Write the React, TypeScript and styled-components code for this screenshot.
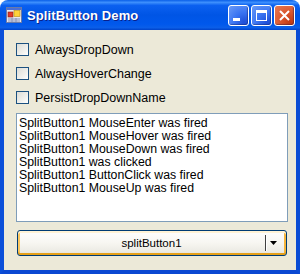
import React, { useState, ReactElement } from 'react';
import styled, { createGlobalStyle } from 'styled-components';

const GlobalStyle = createGlobalStyle`
    html, body {
        margin: 0;
        padding: 0;
        background: #ffffff;
    }
    * {
        box-sizing: border-box;
    }
`;

const Window = styled.div`
    width: 300px;
    height: 274px;
    display: flex;
    flex-direction: column;
    font-family: "Liberation Sans", Arial, sans-serif;
`;

const TitleBar = styled.div`
    height: 30px;
    flex: none;
    display: flex;
    align-items: center;
    padding: 0 5px 0 6px;
    border-radius: 8px 8px 0 0;
    background: linear-gradient(to bottom, #0a5fe8 0%, #3d8ffd 8%, #0b60f0 18%, #0055e5 50%, #0058ec 80%, #0a5ee9 92%, #0042c8 100%);
`;

const TitleText = styled.div`
    flex: 1;
    margin-left: 5px;
    color: #ffffff;
    font-weight: bold;
    font-size: 13px;
    letter-spacing: 0.1px;
    text-shadow: 1px 1px 0 #0a1f8a;
`;

const Controls = styled.div`
    display: flex;
    gap: 2px;
    margin-top: 1px;
`;

const ControlButton = styled.button<{ $close?: boolean }>`
    width: 21px;
    height: 21px;
    padding: 0;
    border: 1px solid #ffffff;
    border-radius: 3px;
    display: flex;
    align-items: center;
    justify-content: center;
    background: ${p => p.$close
        ? 'radial-gradient(circle at 80% 85%, #c23a14 0%, #d9532a 40%, #e67a55 100%)'
        : 'radial-gradient(circle at 80% 85%, #1e4fd8 0%, #3a74f2 45%, #6b9bf7 100%)'};
    box-shadow: inset -1px -1px 1px rgba(0, 0, 60, 0.35);
`;

const Body = styled.div`
    flex: 1;
    background: #ece9d8;
    border: 4px solid #0a54e0;
    border-top: none;
    border-left-color: #0b4fd9;
    border-right-color: #0a4cd4;
    border-bottom-color: #0a48d2;
    padding: 13px 8px 0 12px;
    display: flex;
    flex-direction: column;
`;

const CheckList = styled.div`
    display: flex;
    flex-direction: column;
    gap: 11px;
`;

const CheckRow = styled.label`
    display: flex;
    align-items: center;
    height: 13px;
    font-size: 12.5px;
    color: #000000;
    cursor: default;
`;

const CheckBox = styled.span`
    width: 13px;
    height: 13px;
    flex: none;
    border: 1px solid #1c5180;
    background: linear-gradient(135deg, #dcdcd7 0%, #f0f0ec 60%, #ffffff 100%);
    margin-right: 6px;
`;

const LogBox = styled.div`
    margin-top: 9px;
    height: 109px;
    background: #ffffff;
    border: 1px solid #7f9db9;
    padding: 3px 2px;
    font-size: 12.3px;
    line-height: 13px;
    color: #000000;
`;

const SplitButton = styled.div`
    margin-top: 8px;
    margin-left: 1px;
    margin-right: 1px;
    height: 26px;
    display: flex;
    align-items: center;
    border: 1px solid #003c74;
    border-radius: 3px;
    background: linear-gradient(to bottom, #ffffff 0%, #f7f6f1 50%, #ecebe4 85%, #e3e0d6 100%);
    box-shadow: inset 0 2px 0 #fff3d6, inset 0 -2px 0 #e5a01a, inset 2px 0 0 #fbc760, inset -2px 0 0 #f5b53c;
    font-size: 11.5px;
    color: #000000;
`;

const ButtonLabel = styled.div`
    flex: 1;
    text-align: center;
    padding-left: 20px;
`;

const Divider = styled.div`
    width: 1px;
    height: 16px;
    background: #404040;
    box-shadow: 1px 0 0 #ffffff;
`;

const Arrow = styled.div`
    width: 20px;
    display: flex;
    justify-content: center;
    padding-right: 6px;
`;

const AppIcon = () => (
    <svg width="16" height="16" viewBox="0 0 16 16">
        <rect x="0.5" y="0.5" width="15" height="15" fill="#e8e8f0" stroke="#6a7aa8" />
        <rect x="1" y="1" width="14" height="2" fill="#4b6fd6" />
        <rect x="2" y="5" width="5" height="5" fill="#e23a2a" stroke="#8a1a10" strokeWidth="0.6" />
        <rect x="8" y="3.5" width="6" height="6" fill="#ffd23a" stroke="#b88a10" strokeWidth="0.6" />
        <line x1="2" y1="12" x2="14" y2="12" stroke="#8892b8" />
        <line x1="2" y1="14" x2="14" y2="14" stroke="#8892b8" />
        <line x1="6" y1="11" x2="6" y2="15" stroke="#8892b8" />
        <line x1="10" y1="11" x2="10" y2="15" stroke="#8892b8" />
    </svg>
);

const options = ['AlwaysDropDown', 'AlwaysHoverChange', 'PersistDropDownName'];

const log = [
    'SplitButton1 MouseEnter was fired',
    'SplitButton1 MouseHover was fired',
    'SplitButton1 MouseDown was fired',
    'SplitButton1 was clicked',
    'SplitButton1 ButtonClick was fired',
    'SplitButton1 MouseUp was fired',
];

export default function App(): ReactElement {
    const [checked] = useState<boolean[]>([false, false, false]);

    return (
        <>
            <GlobalStyle />
            <Window>
                <TitleBar>
                    <AppIcon />
                    <TitleText>SplitButton Demo</TitleText>
                    <Controls>
                        <ControlButton aria-label="Minimize">
                            <svg width="19" height="19" viewBox="0 0 19 19">
                                <rect x="4" y="12" width="7" height="3" fill="#ffffff" />
                            </svg>
                        </ControlButton>
                        <ControlButton aria-label="Maximize">
                            <svg width="19" height="19" viewBox="0 0 19 19">
                                <rect x="4.5" y="4.5" width="10" height="10" fill="none" stroke="#ffffff" />
                                <rect x="4" y="4" width="11" height="3" fill="#ffffff" />
                            </svg>
                        </ControlButton>
                        <ControlButton aria-label="Close" $close>
                            <svg width="19" height="19" viewBox="0 0 19 19">
                                <path d="M5 5 L14 14 M14 5 L5 14" stroke="#ffffff" strokeWidth="2" />
                            </svg>
                        </ControlButton>
                    </Controls>
                </TitleBar>
                <Body>
                    <CheckList>
                        {options.map((o, i) => (
                            <CheckRow key={o}>
                                <CheckBox aria-checked={checked[i]} />
                                {o}
                            </CheckRow>
                        ))}
                    </CheckList>
                    <LogBox>
                        {log.map((l, i) => <div key={i}>{l}</div>)}
                    </LogBox>
                    <SplitButton>
                        <ButtonLabel>splitButton1</ButtonLabel>
                        <Divider />
                        <Arrow>
                            <svg width="7" height="4" viewBox="0 0 7 4">
                                <path d="M0 0 H7 L3.5 4 Z" fill="#000000" />
                            </svg>
                        </Arrow>
                    </SplitButton>
                </Body>
            </Window>
        </>
    );
}
